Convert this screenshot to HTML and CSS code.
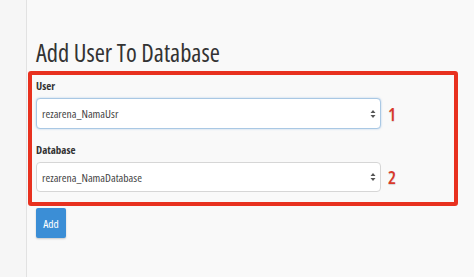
FILE: index.html
```html
<!DOCTYPE html>
<html>
<head>
<meta charset="utf-8">
<link rel="stylesheet" href="styles.css">
</head>
<body>
<div class="page">
  <div class="sidebar"></div>
  <div class="main">
    <h1 class="title">Add User To Database</h1>
    <div class="highlight">
      <div class="field">
        <label class="label">User</label>
        <div class="row">
          <div class="select focused">
            <span class="value">rezarena_NamaUsr</span>
            <svg class="arrows" width="6" height="10" viewBox="0 0 6 10"><path d="M3 1 L5.5 4 H0.5 Z M3 9 L5.5 6 H0.5 Z" fill="#555"/></svg>
          </div>
          <span class="num">1</span>
        </div>
      </div>
      <div class="field">
        <label class="label">Database</label>
        <div class="row">
          <div class="select">
            <span class="value">rezarena_NamaDatabase</span>
            <svg class="arrows" width="6" height="10" viewBox="0 0 6 10"><path d="M3 1 L5.5 4 H0.5 Z M3 9 L5.5 6 H0.5 Z" fill="#555"/></svg>
          </div>
          <span class="num">2</span>
        </div>
      </div>
    </div>
    <button class="btn">Add</button>
  </div>
</div>
</body>
</html>
```
FILE: styles.css
```css
html, body {
  margin: 0;
  padding: 0;
}
body {
  width: 474px;
  height: 277px;
  overflow: hidden;
  background: #f9f9f9;
  font-family: "Open Sans", "Liberation Sans", sans-serif;
  font-stretch: 75%;
  color: #333;
}
.page {
  display: flex;
  height: 277px;
}
.sidebar {
  width: 26px;
  flex: none;
  background: #f6f6f6;
  border-right: 1px solid #e2e2e2;
}
.main {
  flex: 1;
  padding-left: 1px;
}
.title {
  margin: 38px 0 0 8px;
  font-size: 24.5px;
  line-height: 30px;
  font-weight: 400;
  color: #333;
}
.highlight {
  margin-top: 3px;
  width: 418px;
  border: 4px solid #e8311f;
  border-radius: 3px;
  padding: 3px 0 10px 4px;
}
.field + .field {
  margin-top: 13px;
}
.label {
  display: block;
  font-size: 11px;
  line-height: 15px;
  font-weight: 700;
  color: #333;
}
.row {
  display: flex;
  align-items: center;
  margin-top: 5px;
}
.select {
  width: 345px;
  height: 30px;
  box-sizing: border-box;
  display: flex;
  align-items: center;
  justify-content: space-between;
  background: #fff;
  border: 1px solid #d6d6d6;
  border-radius: 4px;
  padding: 0 4px 0 5px;
}
.select.focused {
  border-color: #a9c8e4;
  box-shadow: 0 0 2px rgba(102, 160, 220, 0.5);
  height: 31px;
}
.value {
  font-size: 11.5px;
  color: #444;
}
.num {
  margin-left: 7px;
  font-size: 18px;
  font-weight: 600;
  color: #d9392a;
  text-shadow: 0 1px 1px rgba(0,0,0,0.15);
}
.btn {
  margin: 2px 0 0 8px;
  width: 30px;
  height: 30px;
  padding: 0;
  border: none;
  border-radius: 2px;
  background: #3b8ed6;
  color: #fff;
  font-family: inherit;
  font-stretch: 75%;
  font-size: 11.5px;
  box-shadow: 0 1px 2px rgba(0,0,0,0.2);
}
```
